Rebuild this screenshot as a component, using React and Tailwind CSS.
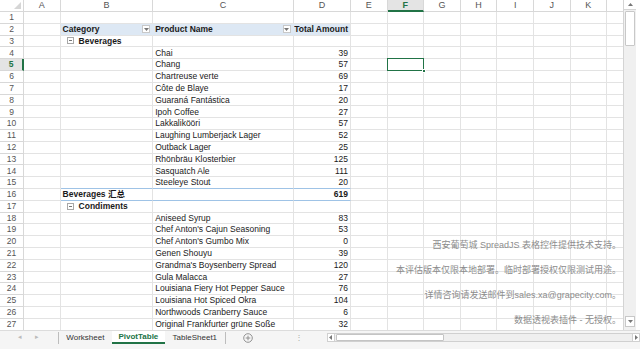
import React from "react";

const FONT = "font-['Liberation_Sans','Noto_Sans_CJK_SC',sans-serif]";
const GRID = "border-[#e3e3e3]";

const EXTRA = [
  { l: "E", w: "w-[36.6px]" },
  { l: "F", w: "w-[36.6px]" },
  { l: "G", w: "w-[36.6px]" },
  { l: "H", w: "w-[36.6px]" },
  { l: "I", w: "w-[36.6px]" },
  { l: "J", w: "w-[36.6px]" },
  { l: "K", w: "w-[36.6px]" },
];

const bev = [
  ["Chai", "39"],
  ["Chang", "57"],
  ["Chartreuse verte", "69"],
  ["Côte de Blaye", "17"],
  ["Guaraná Fantástica", "20"],
  ["Ipoh Coffee", "27"],
  ["Lakkalikööri", "57"],
  ["Laughing Lumberjack Lager", "52"],
  ["Outback Lager", "25"],
  ["Rhönbräu Klosterbier", "125"],
  ["Sasquatch Ale", "111"],
  ["Steeleye Stout", "20"],
];
const cond = [
  ["Aniseed Syrup", "83"],
  ["Chef Anton's Cajun Seasoning", "53"],
  ["Chef Anton's Gumbo Mix", "0"],
  ["Genen Shouyu", "39"],
  ["Grandma's Boysenberry Spread", "120"],
  ["Gula Malacca", "27"],
  ["Louisiana Fiery Hot Pepper Sauce", "76"],
  ["Louisiana Hot Spiced Okra", "104"],
  ["Northwoods Cranberry Sauce", "6"],
  ["Original Frankfurter grüne Soße", "32"],
];

const rows = [
  {},
  { hdr: true },
  { group: "Beverages" },
  ...bev.map(([c, d], i) => ({ c, d, preTotal: i === bev.length - 1 })),
  { total: "Beverages 汇总", d: "619" },
  { group: "Condiments" },
  ...cond.map(([c, d]) => ({ c, d })),
];

function Dropdown() {
  return (
    <span className="ml-auto mr-[2px] w-[8px] h-[8px] bg-white border border-[#c8c8c8] flex items-center justify-center shrink-0">
      <svg width="5" height="3" viewBox="0 0 5 3">
        <path d="M0 0 L5 0 L2.5 3 Z" fill="#777" />
      </svg>
    </span>
  );
}

function Collapse() {
  return (
    <span className="ml-[4px] mr-[5px] w-[7px] h-[7px] border border-[#a8a8a8] bg-white flex items-center justify-center shrink-0">
      <span className="w-[3px] h-[1px] bg-[#777]" />
    </span>
  );
}

function Row({ n, r }) {
  const sel = n === 5;
  const cell = `shrink-0 h-full border-r border-b ${GRID} flex items-center overflow-hidden whitespace-nowrap`;
  const hdrBg = "bg-[#dde8f4]";
  let bBorder = r.hdr ? "border-r-[#dde8f4]" : "";
  let cBorder = r.hdr ? "border-r-[#dde8f4]" : "";
  let bottomBlue = r.preTotal || r.total ? "border-b-[#9fc3e6]" : "";
  return (
    <div className="flex h-[11.8px]">
      <div
        className={`w-[24px] shrink-0 h-full border-r border-b flex items-center justify-center text-[8.5px] ${
          sel
            ? "bg-[#e4e4e4] text-[#217346] font-bold border-r-[2px] border-r-[#217346] border-b-[#d8d8d8]"
            : "bg-white text-[#555] border-[#d8d8d8]"
        }`}
      >
        {n}
      </div>
      <div className={`${cell} w-[36.6px]`} />
      <div className={`${cell} w-[92.6px] ${r.hdr ? hdrBg : ""} ${bBorder} ${bottomBlue} pl-[2px]`}>
        {r.hdr && (
          <>
            <span className="font-bold">Category</span>
            <Dropdown />
          </>
        )}
        {r.group && (
          <>
            <Collapse />
            <span className="font-bold">{r.group}</span>
          </>
        )}
        {r.total && <span className="font-bold">{r.total}</span>}
      </div>
      <div className={`${cell} w-[140.6px] ${r.hdr ? hdrBg : ""} ${cBorder} ${bottomBlue} pl-[2px]`}>
        {r.hdr && (
          <>
            <span className="font-bold">Product Name</span>
            <Dropdown />
          </>
        )}
        {r.c && <span>{r.c}</span>}
      </div>
      <div className={`${cell} w-[57.2px] ${r.hdr ? hdrBg : ""} ${bottomBlue} justify-end pr-[2px]`}>
        {r.hdr && <span className="font-bold">Total Amount</span>}
        {r.d && <span className={r.total ? "font-bold" : ""}>{r.d}</span>}
      </div>
      {EXTRA.map((c) => (
        <div key={c.l} className={`${cell} ${c.w} ${sel && c.l === "F" ? "relative overflow-visible" : ""}`}>
          {sel && c.l === "F" && (
            <>
              <div className="absolute left-[-1px] top-[-1px] right-[-1px] bottom-[-1px] border-[1.5px] border-[#217346]" />
              <div className="absolute right-[-3px] bottom-[-3px] w-[4px] h-[4px] bg-[#217346] border border-white" />
            </>
          )}
        </div>
      ))}
      <div className={`${cell} flex-1 border-r-0`} />
    </div>
  );
}

function ColHeader() {
  const base = "shrink-0 h-full border-r border-b border-[#d8d8d8] flex items-center justify-center text-[9px] text-[#555]";
  const cols = [
    { l: "A", w: "w-[36.6px]" },
    { l: "B", w: "w-[92.6px]" },
    { l: "C", w: "w-[140.6px]" },
    { l: "D", w: "w-[57.2px]" },
    ...EXTRA,
  ];
  return (
    <div className="flex h-[12px]">
      <div className="w-[24px] shrink-0 h-full border-r border-b border-[#d8d8d8] relative bg-white">
        <svg className="absolute right-[2px] bottom-[2px]" width="7" height="7" viewBox="0 0 7 7">
          <path d="M7 0 L7 7 L0 7 Z" fill="#d6d6d6" />
        </svg>
      </div>
      {cols.map((c) =>
        c.l === "F" ? (
          <div key={c.l} className={`${base} ${c.w} bg-[#e4e4e4] text-[#217346] font-bold border-b-[2px] border-b-[#217346]`}>
            {c.l}
          </div>
        ) : (
          <div key={c.l} className={`${base} ${c.w} bg-white`}>
            {c.l}
          </div>
        )
      )}
      <div className={`${base} flex-1 border-r-0 bg-white`} />
    </div>
  );
}

function VScroll() {
  return (
    <div className="w-[17px] shrink-0 h-full bg-white flex">
      <div className="w-[13px] h-full bg-[#f0f0f0] border-l border-[#d4d4d4] flex flex-col">
        <div className="h-[10px] flex items-center justify-center bg-white border-b border-[#d4d4d4]">
          <svg width="5" height="3" viewBox="0 0 5 3">
            <path d="M2.5 0 L5 3 L0 3 Z" fill="#777" />
          </svg>
        </div>
        <div className="h-[35px] mx-[1px] mt-[1px] bg-white border border-[#c8c8c8] rounded-[1px]" />
        <div className="flex-1" />
        <div className="h-[11px] mb-[3px] mx-[1px] flex items-center justify-center bg-white border border-[#c8c8c8]">
          <svg width="5" height="3" viewBox="0 0 5 3">
            <path d="M0 0 L5 0 L2.5 3 Z" fill="#777" />
          </svg>
        </div>
      </div>
    </div>
  );
}

function TabBar() {
  return (
    <div className="h-[19px] flex items-start bg-[#f5f5f5] border-t border-[#dcdcdc] text-[8px] text-[#333]">
      <div className="w-[59px] h-[13px] flex items-center justify-center gap-[13px] text-[#bbb] text-[7px]">
        <span>◂</span>
        <span>▸</span>
      </div>
      <div className="w-[1px] h-[12px] mt-[1px] bg-[#bdbdbd]" />
      <div className="w-[54px] h-[13px] flex items-center justify-center">Worksheet</div>
      <div className="w-[54px] h-[13px] flex items-center justify-center font-bold text-[#217346] bg-white border-b-[2px] border-[#217346] pt-[1px]">
        PivotTable
      </div>
      <div className="w-[61px] h-[13px] flex items-center justify-center">TableSheet1</div>
      <div className="w-[1px] h-[12px] mt-[1px] bg-[#bdbdbd]" />
      <div className="w-[46px] h-[13px] flex items-center justify-center">
        <svg width="10" height="10" viewBox="0 0 10 10">
          <circle cx="5" cy="5" r="4.3" fill="none" stroke="#888" strokeWidth="0.9" />
          <path d="M5 2.7 V7.3 M2.7 5 H7.3" stroke="#888" strokeWidth="0.9" />
        </svg>
      </div>
      <div className="w-[57px] h-[13px] flex items-center justify-center">
        <span className="text-[#aaa] text-[8px]">⋮</span>
      </div>
      <div className="w-[319px] h-[9px] mt-[2px] flex items-center bg-[#efefef] border border-[#d0d0d0]">
        <div className="w-[7px] h-full bg-white border-r border-[#d0d0d0] flex items-center justify-center">
          <svg width="3" height="5" viewBox="0 0 3 5">
            <path d="M3 0 L3 5 L0 2.5 Z" fill="#777" />
          </svg>
        </div>
        <div className="w-[108px] h-[7px] ml-[1px] bg-white border border-[#c4c4c4] rounded-[1px]" />
        <div className="flex-1" />
        <div className="w-[7px] h-full bg-white border-l border-[#d0d0d0] flex items-center justify-center">
          <svg width="3" height="5" viewBox="0 0 3 5">
            <path d="M0 0 L3 2.5 L0 5 Z" fill="#777" />
          </svg>
        </div>
      </div>
    </div>
  );
}

export default function App() {
  return (
    <div className={`w-[640px] h-[349px] bg-white overflow-hidden flex flex-col relative text-[#1a1a1a] ${FONT}`}>
      <div className="flex h-[330px] shrink-0">
        <div className="flex-1 h-full overflow-hidden text-[8.5px] leading-none">
          <ColHeader />
          {rows.map((r, i) => (
            <Row key={i} n={i + 1} r={r} />
          ))}
        </div>
        <VScroll />
      </div>
      <TabBar />
      <div className="absolute top-[240px] right-[19px] flex flex-col items-end gap-[14px] text-[9px] leading-[11px] text-[#8c8c8c] pointer-events-none">
        <div>西安葡萄城 SpreadJS 表格控件提供技术支持。</div>
        <div>本评估版本仅限本地部署。临时部署授权仅限测试用途。</div>
        <div>详情咨询请发送邮件到sales.xa@grapecity.com。</div>
        <div>数据透视表插件 - 无授权。</div>
      </div>
    </div>
  );
}
